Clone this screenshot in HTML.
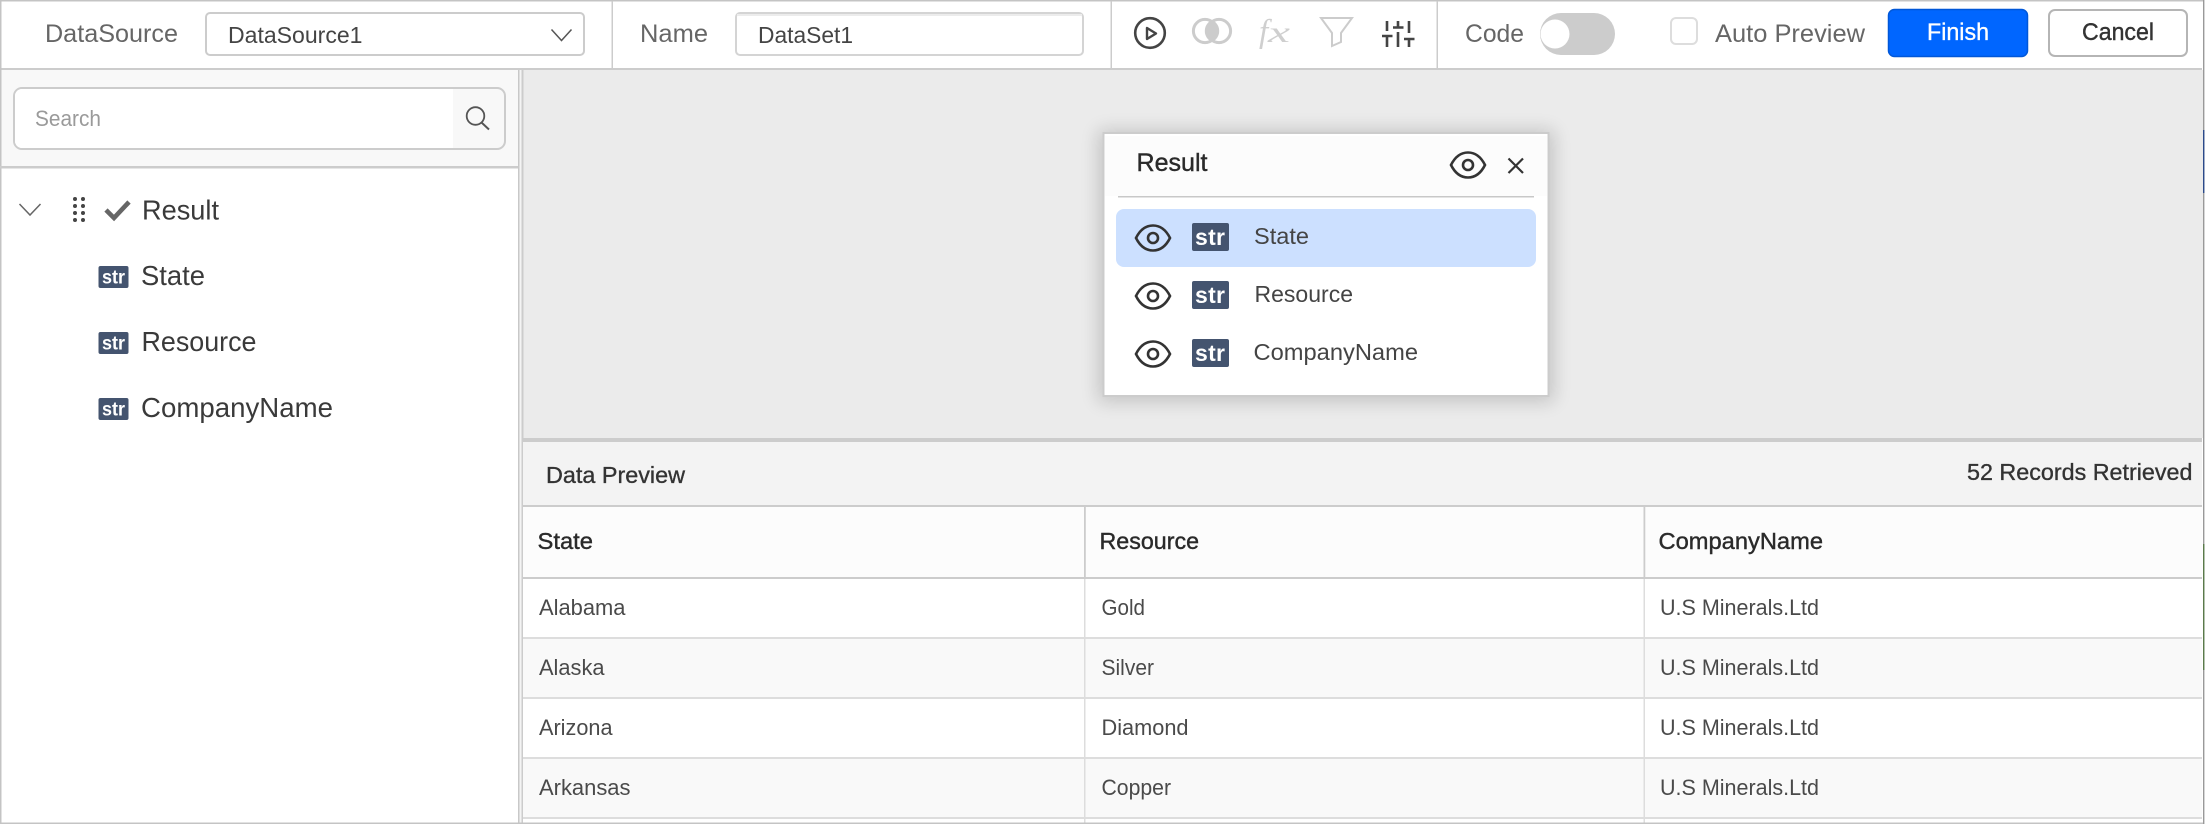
<!DOCTYPE html>
<html lang="en">
<head>
<meta charset="utf-8">
<title>DataSet</title>
<style>
html,body{margin:0;padding:0;width:2205px;height:824px;overflow:hidden;background:#fff}
svg{display:block}
text{font-family:"Liberation Sans",sans-serif;white-space:pre}
.lab{fill:#666;font-size:25px}
.val{fill:#444;font-size:23px}
.tree{fill:#3a3a3a;font-size:27.5px}
.pop{fill:#444;font-size:23.5px}
.cell{fill:#4a4a4a;font-size:22.5px}
.hd{fill:#2a2a2a;font-size:23.5px;stroke:#2a2a2a;stroke-width:.4px}
.bd{fill:#fff;font-weight:bold}
</style>
</head>
<body>
<svg width="2205" height="824" viewBox="0 0 2205 824" xmlns="http://www.w3.org/2000/svg">
<defs>
<filter id="sh" x="-15%" y="-20%" width="130%" height="140%"><feGaussianBlur stdDeviation="9"/></filter>
<g id="eye" fill="none" stroke="#333" stroke-width="2.6">
<path d="M-17,0 C-13,-8 -7,-12.5 0,-12.5 C7,-12.5 13,-8 17,0 C13,8 7,12.5 0,12.5 C-7,12.5 -13,8 -17,0Z"/>
<circle r="5"/>
</g>
</defs>

<!-- backgrounds -->
<rect width="2205" height="824" fill="#fff"/>
<rect x="522" y="70" width="1681" height="368" fill="#ebebeb"/>
<rect x="0" y="70" width="518" height="97" fill="#f8f8f8"/>
<rect x="519" y="70" width="3" height="754" fill="#f4f4f4"/>

<!-- header lines -->
<rect x="0" y="0" width="2203" height="1.5" fill="#c4c4c4"/>
<rect x="0" y="68" width="2202" height="2" fill="#cccccc"/>
<rect x="0" y="0" width="1.5" height="824" fill="#c4c4c4"/>
<rect x="611.5" y="1" width="1.5" height="67" fill="#cccccc"/>
<rect x="1110.5" y="1" width="1.5" height="67" fill="#cccccc"/>
<rect x="1436.5" y="1" width="1.5" height="67" fill="#cccccc"/>

<!-- DataSource -->
<text x="45" y="42" class="lab" textLength="133" lengthAdjust="spacingAndGlyphs">DataSource</text>
<rect x="206" y="13" width="378" height="42" rx="4" fill="#fff" stroke="#cccccc" stroke-width="2"/>
<text x="228" y="43" class="val" textLength="134.5" lengthAdjust="spacingAndGlyphs">DataSource1</text>
<path d="M551.5,29.5 L561.5,40.5 L571.5,29.5" fill="none" stroke="#555" stroke-width="1.5"/>

<!-- Name -->
<text x="640" y="42" class="lab" textLength="68" lengthAdjust="spacingAndGlyphs">Name</text>
<rect x="736" y="13" width="347" height="42" rx="4" fill="#fff" stroke="#d4d4d4" stroke-width="2"/>
<rect x="737" y="14" width="345" height="2" fill="#ececec"/>
<text x="758" y="43" class="val" textLength="95" lengthAdjust="spacingAndGlyphs">DataSet1</text>

<!-- toolbar icons -->
<circle cx="1150" cy="33" r="14.8" fill="none" stroke="#444" stroke-width="2.6"/>
<path d="M1147,28 V39 L1156,33.5Z" fill="none" stroke="#444" stroke-width="2.4" stroke-linejoin="round"/>
<path d="M1212,20 A12,12 0 0 1 1212,42 A12,12 0 0 1 1212,20Z" fill="#cccccc"/>
<circle cx="1205" cy="31" r="11.6" fill="none" stroke="#cccccc" stroke-width="3"/>
<circle cx="1219" cy="31" r="11.6" fill="none" stroke="#cccccc" stroke-width="3"/>
<text x="1259" y="42" style="font-family:'Liberation Serif',serif;font-style:italic" font-size="33" fill="#cfcfcf">f</text>
<text x="1268" y="42" style="font-family:'Liberation Serif',serif;font-style:italic" font-size="30" fill="#cfcfcf" textLength="22" lengthAdjust="spacingAndGlyphs">x</text>
<path d="M1321,18 H1352 L1341,33 V42 L1332,46 V33Z" fill="none" stroke="#cccccc" stroke-width="2"/>
<g fill="none" stroke="#444" stroke-width="2.6">
<path d="M1387,21 V31 M1382,36 H1392.5 M1387,36 V47"/>
<path d="M1398,21 V27 M1393,27.5 H1403.5 M1398,32 V47"/>
<path d="M1409,21 V33 M1404,39 H1414.5 M1409,39 V47"/>
</g>

<!-- Code toggle -->
<text x="1465" y="42" class="lab" textLength="59" lengthAdjust="spacingAndGlyphs">Code</text>
<rect x="1540" y="13" width="75" height="42" rx="21" fill="#cccccc"/>
<circle cx="1555" cy="34" r="14.5" fill="#fff"/>

<!-- Auto preview -->
<rect x="1671" y="18" width="26" height="26" rx="5" fill="#fff" stroke="#dddddd" stroke-width="2"/>
<text x="1715" y="42" class="lab" textLength="150" lengthAdjust="spacingAndGlyphs">Auto Preview</text>

<!-- Buttons -->
<rect x="1888.5" y="9.5" width="139" height="47" rx="6" fill="#0066ff" stroke="#0057d8" stroke-width="1.5"/>
<text x="1927" y="40" font-size="24" fill="#fff" stroke="#fff" stroke-width=".35" textLength="62" lengthAdjust="spacingAndGlyphs">Finish</text>
<rect x="2049" y="10" width="138" height="46" rx="6" fill="#fff" stroke="#b5b5b5" stroke-width="2"/>
<text x="2082" y="40" font-size="24" fill="#333" stroke="#333" stroke-width=".4" textLength="72" lengthAdjust="spacingAndGlyphs">Cancel</text>

<!-- Left panel -->
<rect x="14" y="88" width="491" height="61" rx="8" fill="#f8f8f8" stroke="#cccccc" stroke-width="2"/>
<path d="M453,89 H22 A7,7 0 0 0 15,96 V141 A7,7 0 0 0 22,148 H453Z" fill="#fff"/>
<text x="35" y="126" font-size="22.5" fill="#9a9a9a" textLength="66" lengthAdjust="spacingAndGlyphs">Search</text>
<circle cx="475.5" cy="116" r="8.8" fill="none" stroke="#555" stroke-width="1.8"/>
<path d="M481.5,122.5 L489,129.5" stroke="#555" stroke-width="2" fill="none"/>
<rect x="0" y="166" width="518" height="2.5" fill="#cccccc"/>
<rect x="518" y="70" width="1.5" height="754" fill="#c8c8c8"/>
<rect x="521.5" y="70" width="2" height="754" fill="#cccccc"/>

<!-- Tree -->
<path d="M19.5,204 L30,215 L40.5,204" fill="none" stroke="#666" stroke-width="1.5"/>
<g fill="#444">
<circle cx="75" cy="199" r="2"/><circle cx="83" cy="199" r="2"/>
<circle cx="75" cy="206" r="2"/><circle cx="83" cy="206" r="2"/>
<circle cx="75" cy="213" r="2"/><circle cx="83" cy="213" r="2"/>
<circle cx="75" cy="220" r="2"/><circle cx="83" cy="220" r="2"/>
</g>
<path d="M106,210 L114,218 L129,202" fill="none" stroke="#666" stroke-width="4.6"/>
<text x="142" y="219.5" class="tree" textLength="77" lengthAdjust="spacingAndGlyphs">Result</text>

<rect x="98.5" y="266" width="30" height="22" rx="2" fill="#44546f"/>
<text x="102" y="283.5" class="bd" font-size="19" textLength="23" lengthAdjust="spacingAndGlyphs">str</text>
<text x="141" y="285" class="tree" textLength="64" lengthAdjust="spacingAndGlyphs">State</text>

<rect x="98.5" y="332" width="30" height="22" rx="2" fill="#44546f"/>
<text x="102" y="349.5" class="bd" font-size="19" textLength="23" lengthAdjust="spacingAndGlyphs">str</text>
<text x="141.5" y="351" class="tree" textLength="115" lengthAdjust="spacingAndGlyphs">Resource</text>

<rect x="98.5" y="398" width="30" height="22" rx="2" fill="#44546f"/>
<text x="102" y="415.5" class="bd" font-size="19" textLength="23" lengthAdjust="spacingAndGlyphs">str</text>
<text x="141" y="417" class="tree" textLength="192" lengthAdjust="spacingAndGlyphs">CompanyName</text>

<!-- Popup -->
<rect x="1098" y="130" width="456" height="272" fill="#000" opacity=".16" filter="url(#sh)"/>
<rect x="1103.5" y="133" width="445" height="263" fill="#fff" stroke="#cccccc" stroke-width="2"/>
<rect x="1105" y="136" width="442" height="60" fill="#fcfcfc"/>
<rect x="1118" y="196" width="416" height="1.5" fill="#c8c8c8"/>
<text x="1136.5" y="171" font-size="25" fill="#2a2a2a" stroke="#2a2a2a" stroke-width=".4" textLength="71" lengthAdjust="spacingAndGlyphs">Result</text>
<use href="#eye" x="1468" y="165"/>
<path d="M1508.5,158.5 L1523,173 M1523,158.5 L1508.5,173" stroke="#333" stroke-width="2.2" fill="none"/>

<rect x="1116" y="209" width="420" height="58" rx="8" fill="#cce0ff"/>
<use href="#eye" x="1153" y="238"/>
<rect x="1192" y="223" width="37" height="28" rx="2" fill="#44546f"/>
<text x="1195" y="245" class="bd" font-size="23" textLength="30" lengthAdjust="spacing">str</text>
<text x="1254" y="244" class="pop" textLength="55" lengthAdjust="spacingAndGlyphs">State</text>

<use href="#eye" x="1153" y="296"/>
<rect x="1192" y="281" width="37" height="28" rx="2" fill="#44546f"/>
<text x="1195" y="303" class="bd" font-size="23" textLength="30" lengthAdjust="spacing">str</text>
<text x="1254.5" y="302" class="pop" textLength="98.5" lengthAdjust="spacingAndGlyphs">Resource</text>

<use href="#eye" x="1153" y="354"/>
<rect x="1192" y="339" width="37" height="28" rx="2" fill="#44546f"/>
<text x="1195" y="361" class="bd" font-size="23" textLength="30" lengthAdjust="spacing">str</text>
<text x="1253.5" y="360" class="pop" textLength="164.5" lengthAdjust="spacingAndGlyphs">CompanyName</text>

<!-- Data preview bar -->
<rect x="523" y="438" width="1679" height="4" fill="#cccccc"/>
<rect x="523" y="442" width="1679" height="63" fill="#f3f3f3"/>
<rect x="523" y="505" width="1679" height="2" fill="#cccccc"/>
<text x="546" y="483" font-size="23.5" fill="#333" stroke="#333" stroke-width=".35" textLength="139" lengthAdjust="spacingAndGlyphs">Data Preview</text>
<text x="1967" y="480" font-size="23.5" fill="#333" stroke="#333" stroke-width=".35" textLength="225.5" lengthAdjust="spacingAndGlyphs">52 Records Retrieved</text>

<!-- Table -->
<rect x="523" y="507" width="1679" height="71" fill="#fcfcfc"/>
<rect x="523" y="577" width="1679" height="2" fill="#cccccc"/>
<text x="537.5" y="549" class="hd" textLength="55.5" lengthAdjust="spacingAndGlyphs">State</text>
<text x="1099.5" y="549" class="hd" textLength="99.5" lengthAdjust="spacingAndGlyphs">Resource</text>
<text x="1658.5" y="549" class="hd" textLength="164.5" lengthAdjust="spacingAndGlyphs">CompanyName</text>

<rect x="523" y="579" width="1679" height="59" fill="#fff"/>
<rect x="523" y="639" width="1679" height="59" fill="#f9f9f9"/>
<rect x="523" y="699" width="1679" height="59" fill="#fff"/>
<rect x="523" y="759" width="1679" height="59" fill="#f9f9f9"/>
<rect x="523" y="819" width="1679" height="4" fill="#fff"/>
<rect x="523" y="637" width="1679" height="2" fill="#dddddd"/>
<rect x="523" y="697" width="1679" height="2" fill="#dddddd"/>
<rect x="523" y="757" width="1679" height="2" fill="#dddddd"/>
<rect x="523" y="817" width="1679" height="2" fill="#dddddd"/>
<rect x="1084" y="507" width="1.8" height="70" fill="#cccccc"/>
<rect x="1643.5" y="507" width="1.8" height="70" fill="#cccccc"/>
<rect x="1084" y="579" width="1.5" height="245" fill="#dddddd"/>
<rect x="1643.5" y="579" width="1.5" height="245" fill="#dddddd"/>

<text x="539" y="615" class="cell" textLength="86.5" lengthAdjust="spacingAndGlyphs">Alabama</text>
<text x="1101.5" y="615" class="cell" textLength="43.5" lengthAdjust="spacingAndGlyphs">Gold</text>
<text x="1660" y="615" class="cell" textLength="159" lengthAdjust="spacingAndGlyphs">U.S Minerals.Ltd</text>

<text x="539" y="675" class="cell" textLength="65.5" lengthAdjust="spacingAndGlyphs">Alaska</text>
<text x="1101.5" y="675" class="cell" textLength="52.5" lengthAdjust="spacingAndGlyphs">Silver</text>
<text x="1660" y="675" class="cell" textLength="159" lengthAdjust="spacingAndGlyphs">U.S Minerals.Ltd</text>

<text x="539" y="735" class="cell" textLength="73.5" lengthAdjust="spacingAndGlyphs">Arizona</text>
<text x="1101.5" y="735" class="cell" textLength="87" lengthAdjust="spacingAndGlyphs">Diamond</text>
<text x="1660" y="735" class="cell" textLength="159" lengthAdjust="spacingAndGlyphs">U.S Minerals.Ltd</text>

<text x="539" y="795" class="cell" textLength="91.5" lengthAdjust="spacingAndGlyphs">Arkansas</text>
<text x="1101.5" y="795" class="cell" textLength="69.5" lengthAdjust="spacingAndGlyphs">Copper</text>
<text x="1660" y="795" class="cell" textLength="159" lengthAdjust="spacingAndGlyphs">U.S Minerals.Ltd</text>

<!-- outer edges -->
<rect x="0" y="822.5" width="2203" height="1.5" fill="#c4c4c4"/>
<rect x="2203" y="0" width="1.4" height="824" fill="#999"/>
<rect x="2203" y="130" width="1.4" height="63" fill="#2a4a8a"/>
<rect x="2203" y="544" width="1.4" height="126" fill="#5a7a4a"/>
</svg>
</body>
</html>
